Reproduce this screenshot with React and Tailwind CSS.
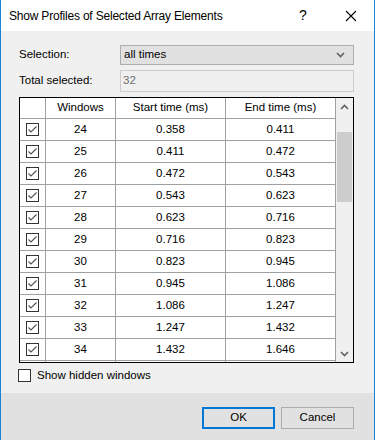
import React from 'react';

const rows = [
  [24, '0.358', '0.411'],
  [25, '0.411', '0.472'],
  [26, '0.472', '0.543'],
  [27, '0.543', '0.623'],
  [28, '0.623', '0.716'],
  [29, '0.716', '0.823'],
  [30, '0.823', '0.945'],
  [31, '0.945', '1.086'],
  [32, '1.086', '1.247'],
  [33, '1.247', '1.432'],
  [34, '1.432', '1.646'],
];

function CheckBox({ checked }) {
  return (
    <div className="w-[13px] h-[13px] border border-[#333333] bg-white flex items-center justify-center">
      {checked && (
        <svg width="11" height="11" viewBox="0 0 11 11">
          <path d="M1.5 5.5 L4 8 L9.5 2.5" fill="none" stroke="#555555" strokeWidth="1.2" />
        </svg>
      )}
    </div>
  );
}

function Chevron({ up }) {
  return (
    <svg width="9" height="6" viewBox="0 0 9 6">
      <path d={up ? 'M1 5 L4.5 1.5 L8 5' : 'M1 1 L4.5 4.5 L8 1'} fill="none" stroke="#606060" strokeWidth="1.6" />
    </svg>
  );
}

export default function App() {
  return (
    <div
      className="w-[375px] h-[440px] border-x border-[#1883d7] bg-[#f0f0f0] flex flex-col text-[11.5px] text-black overflow-hidden"
      style={{ fontFamily: '"Liberation Sans", Arial, sans-serif' }}
    >
      {/* title bar */}
      <div className="h-[31px] bg-white flex items-center shrink-0">
        <span className="pl-[8px] flex-1 text-[12px] tracking-[-0.2px]">Show Profiles of Selected Array Elements</span>
        <span className="w-[46px] text-center text-[14px] mr-[2px]">?</span>
        <span className="w-[46px] flex justify-center">
          <svg width="12" height="12" viewBox="0 0 12 12">
            <path d="M1 1 L11 11 M11 1 L1 11" stroke="#000" strokeWidth="1.1" />
          </svg>
        </span>
      </div>

      <div className="flex flex-col pl-[17px] pr-[20px] pt-[14px]">
        <div className="flex items-center h-[20px]">
          <span className="w-[102px] pl-[1px]">Selection:</span>
          <div className="flex-1 h-[20px] bg-[#e1e1e1] border border-[#adadad] flex items-center pl-[3px] pr-[8px]">
            <span className="flex-1">all times</span>
            <Chevron />
          </div>
        </div>
        <div className="flex items-center h-[22px] mt-[5px]">
          <span className="w-[102px] pl-[1px]">Total selected:</span>
          <div className="flex-1 h-[22px] border border-[#cccccc] flex items-center pl-[2px] text-[#6d6d6d]">
            32
          </div>
        </div>

        {/* grid */}
        <div className="mt-[5px] ml-[1px] w-[335px] h-[266px] border border-black bg-[#f0f0f0] flex overflow-hidden">
          <div className="w-[316px] bg-white flex flex-col">
            <div className="flex h-[21px] shrink-0 border-b border-[#a0a0a0]">
              <div className="w-[26px] border-r border-[#a0a0a0]" />
              <div className="w-[70px] border-r border-[#a0a0a0] flex items-center justify-center">Windows</div>
              <div className="w-[110px] border-r border-[#a0a0a0] flex items-center justify-center">Start time (ms)</div>
              <div className="w-[110px] border-r border-[#a0a0a0] flex items-center justify-center">End time (ms)</div>
            </div>
            {rows.map(([w, s, e]) => (
              <div key={w} className="flex h-[22px] shrink-0 border-b border-[#a0a0a0]">
                <div className="w-[26px] border-r border-[#a0a0a0] flex items-center pl-[6px]">
                  <CheckBox checked />
                </div>
                <div className="w-[70px] border-r border-[#a0a0a0] flex items-center justify-center">{w}</div>
                <div className="w-[110px] border-r border-[#a0a0a0] flex items-center justify-center">{s}</div>
                <div className="w-[110px] border-r border-[#a0a0a0] flex items-center justify-center">{e}</div>
              </div>
            ))}
            {/* partly visible next row */}
            <div className="flex h-[22px] shrink-0">
              <div className="w-[26px] border-r border-[#a0a0a0]" />
              <div className="w-[70px] border-r border-[#a0a0a0]" />
              <div className="w-[110px] border-r border-[#a0a0a0]" />
              <div className="w-[110px] border-r border-[#a0a0a0]" />
            </div>
          </div>
          {/* scrollbar */}
          <div className="w-[17px] flex flex-col bg-[#f0f0f0]">
            <div className="h-[17px] flex items-center justify-center">
              <Chevron up />
            </div>
            <div className="flex-1 px-[1px] pt-[17px]">
              <div className="h-[70px] bg-[#cdcdcd]" />
            </div>
            <div className="h-[17px] flex items-center justify-center">
              <Chevron />
            </div>
          </div>
        </div>

        <div className="flex items-center mt-[6px] h-[13px]">
          <CheckBox />
          <span className="ml-[6px]">Show hidden windows</span>
        </div>
      </div>

      {/* bottom bar */}
      <div className="mt-[11px] flex-1 bg-[#e1e1e1] flex justify-end items-start pt-[14px] pr-[20px] gap-[6px]">
        <button className="w-[73px] h-[22px] border-2 border-[#0078d7] bg-[#e1e1e1] flex items-center justify-center">
          OK
        </button>
        <button className="w-[73px] h-[22px] border border-[#adadad] bg-[#e1e1e1] flex items-center justify-center">
          Cancel
        </button>
      </div>
    </div>
  );
}
